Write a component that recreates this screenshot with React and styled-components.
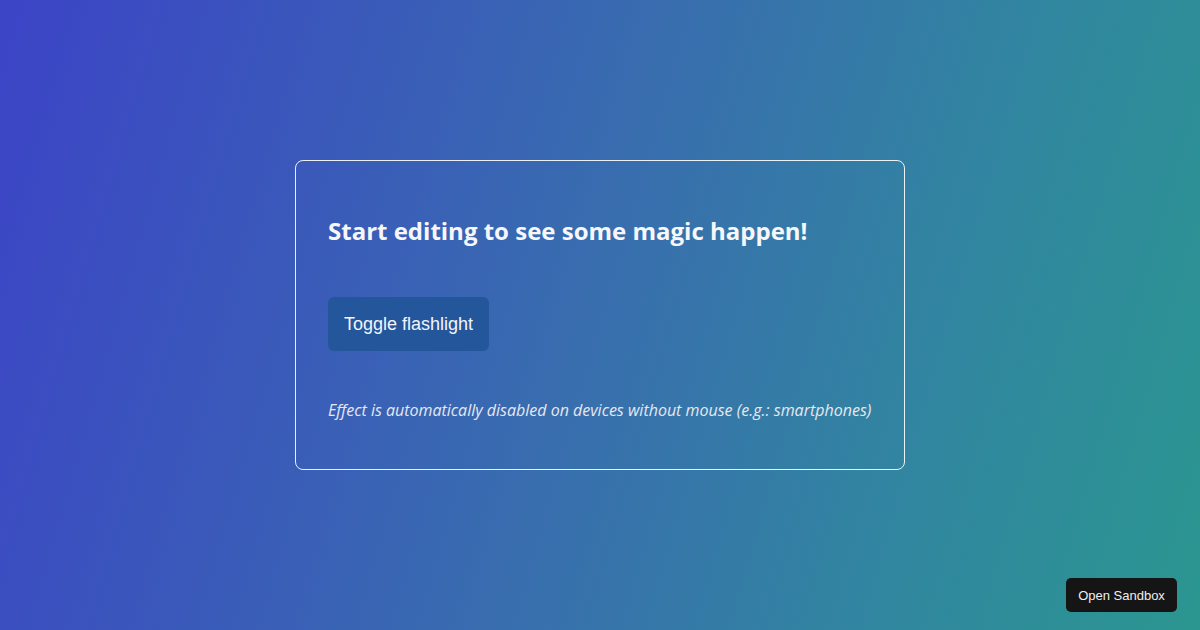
import React from 'react';
import styled, { createGlobalStyle } from 'styled-components';

const GlobalStyle = createGlobalStyle`
  html, body {
    margin: 0;
    padding: 0;
    height: 100%;
  }
  #root {
    height: 100%;
  }
`;

const Page = styled.div`
  position: relative;
  width: 100%;
  height: 100vh;
  display: flex;
  align-items: center;
  justify-content: center;
  background: linear-gradient(106deg, #3c44c7 0%, #3a5bb9 28%, #3870ad 52%, #3186a0 76%, #2b9690 100%);
  font-family: "Open Sans", sans-serif;
  color: #f4f4f8;
`;

const Card = styled.div`
  box-sizing: border-box;
  width: 610px;
  height: 310px;
  padding: 54px 32px 0 32px;
  border: 1px solid rgba(255, 255, 255, 0.9);
  border-radius: 8px;
  display: flex;
  flex-direction: column;
  align-items: flex-start;
`;

const Title = styled.h2`
  margin: 0;
  font-size: 24px;
  line-height: 32px;
  font-weight: 700;
  color: #f7f7fa;
`;

const FlashButton = styled.button`
  margin-top: 50px;
  height: 54px;
  padding: 0 16px;
  border: none;
  border-radius: 6px;
  background: #24569c;
  color: #f2f4f8;
  font-family: "Liberation Sans", Arial, sans-serif;
  font-size: 18px;
  cursor: pointer;
`;

const Note = styled.p`
  margin: 48px 0 0 0;
  font-size: 16px;
  line-height: 22px;
  font-style: italic;
  color: #e6e8f0;
`;

const SandboxButton = styled.a`
  position: absolute;
  right: 23px;
  bottom: 18px;
  display: flex;
  align-items: center;
  justify-content: center;
  width: 111px;
  height: 34px;
  border-radius: 5px;
  background: #151515;
  color: #eeeeee;
  font-family: "Liberation Sans", Arial, sans-serif;
  font-size: 13px;
  text-decoration: none;
`;

export default function App() {
  return (
    <>
      <GlobalStyle />
      <Page>
        <Card>
          <Title>Start editing to see some magic happen!</Title>
          <FlashButton>Toggle flashlight</FlashButton>
          <Note>Effect is automatically disabled on devices without mouse (e.g.: smartphones)</Note>
        </Card>
        <SandboxButton href="#">Open Sandbox</SandboxButton>
      </Page>
    </>
  );
}
